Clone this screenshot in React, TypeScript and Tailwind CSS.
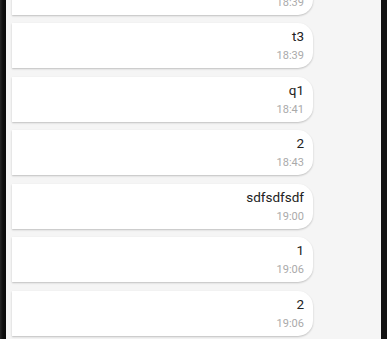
const messages = [
  { id: 1, text: "t2", time: "18:39" },
  { id: 2, text: "t3", time: "18:39" },
  { id: 3, text: "q1", time: "18:41" },
  { id: 4, text: "2", time: "18:43" },
  { id: 5, text: "sdfsdfsdf", time: "19:00" },
  { id: 6, text: "1", time: "19:06" },
  { id: 7, text: "2", time: "19:06" },
];

const App = () => {
  return (
    <div className="flex h-[339px] w-[387px] overflow-hidden bg-[#0d0d0d] font-['Roboto',sans-serif]">
      {/* left edge */}
      <div className="w-[6px] shrink-0 bg-gradient-to-r from-[#262626] via-[#0d0d0d] to-[#0a0a0a]" />

      {/* chat list */}
      <div className="w-[375px] shrink-0 overflow-hidden bg-[#f5f5f5]">
        <div className="-mt-[30.5px] flex flex-col gap-[8.5px] pl-[6px]">
          {messages.map((m) => (
            <div
              key={m.id}
              className="flex h-[45px] w-[301px] flex-col items-end rounded-r-[15px] bg-white pr-[9px] pt-[5px] shadow-[0_1px_2px_rgba(0,0,0,0.22)]"
            >
              <div className="text-[13.5px] leading-4 text-[#222222]">{m.text}</div>
              <div className="mt-[5px] text-[11px] leading-[13px] text-[#aaaaaa]">{m.time}</div>
            </div>
          ))}
        </div>
      </div>

      {/* right edge */}
      <div className="flex-1 bg-[#111111]" />
    </div>
  );
};

export default App;
